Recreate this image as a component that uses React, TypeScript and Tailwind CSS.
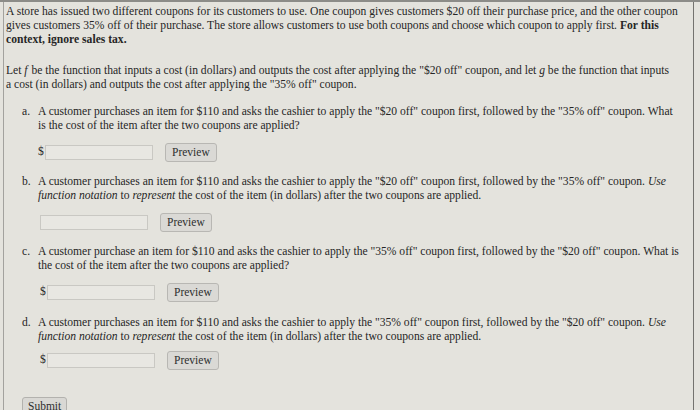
export default function App() {
  return (
    <div className="h-[410px] w-[700px] overflow-hidden bg-[#e4e3dd] font-['Liberation_Serif',serif] text-[11.6px] leading-[14px] text-[#262626]">
      <div className="h-[2px] bg-[#8c8c88]" />
      <div className="ml-[3px] mr-[6px] h-full border-l border-r border-l-[#a3a29e] border-r-[#74736f] pl-[2px] pr-[4px] pt-[3px]">
        {/* Intro */}
        <p className="pr-[6px]">
          A store has issued two different coupons for its customers to use. One coupon gives customers $20 off their
          purchase price, and the other coupon gives customers 35% off of their purchase. The store allows customers to
          use both coupons and choose which coupon to apply first. <b>For this context, ignore sales tax.</b>
        </p>

        <p className="mt-[17px] pr-[14px]">
          Let <i className="pr-[1px]">f</i> be the function that inputs a cost (in dollars) and outputs the cost after
          applying the "$20 off" coupon, and let <i>g</i> be the function that inputs a cost (in dollars) and outputs the
          cost after applying the "35% off" coupon.
        </p>

        {/* a */}
        <Item marker="a." className="mt-[13px] pr-[8px]">
          A customer purchases an item for $110 and asks the cashier to apply the "$20 off" coupon first, followed by the
          "35% off" coupon. What is the cost of the item after the two coupons are applied?
          <AnswerRow dollar className="mt-[9px]" />
        </Item>

        {/* b */}
        <Item marker="b." className="mt-[13px]">
          A customer purchases an item for $110 and asks the cashier to apply the "$20 off" coupon first, followed by the
          "35% off" coupon. <i>Use function notation</i> to <i>represent</i> the cost of the item (in dollars) after the
          two coupons are applied.
          <AnswerRow className="mt-[9px] pl-[2px]" />
        </Item>

        {/* c */}
        <Item marker="c." className="mt-[13px]">
          A customer purchase an item for $110 and asks the cashier to apply the "35% off" coupon first, followed by the
          "$20 off" coupon. What is the cost of the item after the two coupons are applied?
          <AnswerRow dollar className="mt-[9px] pl-[2px]" />
        </Item>

        {/* d */}
        <Item marker="d." className="mt-[14px]">
          A customer purchases an item for $110 and asks the cashier to apply the "35% off" coupon first, followed by the
          "$20 off" coupon. <i>Use function notation</i> to <i>represent</i> the cost of the item (in dollars) after the
          two coupons are applied.
          <AnswerRow dollar className="mt-[6px] pl-[2px]" />
        </Item>

        <button className="ml-[16px] mt-[27px] h-[19px] rounded-[3px] border border-[#b3b2ae] bg-[#d9d8d4] px-[5px] text-[11.5px] leading-[17px] text-[#2e2e2e]">
          Submit
        </button>
      </div>
    </div>
  );
}

function Item({
  marker,
  className,
  children,
}: {
  marker: string;
  className?: string;
  children: React.ReactNode;
}) {
  return (
    <div className={`flex pl-[16px] ${className ?? ""}`}>
      <span className="w-[16px] shrink-0">{marker}</span>
      <div className="flex-1">{children}</div>
    </div>
  );
}

function AnswerRow({ dollar, className }: { dollar?: boolean; className?: string }) {
  return (
    <div className={`flex h-[20px] items-center ${className ?? ""}`}>
      {dollar && <span className="w-[7px]">$</span>}
      <div className="h-[15px] w-[108px] border border-[#c9c8c3] bg-[#e8e7e2]" />
      <button className="ml-[12px] h-[19px] rounded-[3px] border border-[#b8b7b3] bg-[#dad9d5] px-[6px] text-[11.5px] leading-[17px] text-[#2e2e2e]">
        Preview
      </button>
    </div>
  );
}
